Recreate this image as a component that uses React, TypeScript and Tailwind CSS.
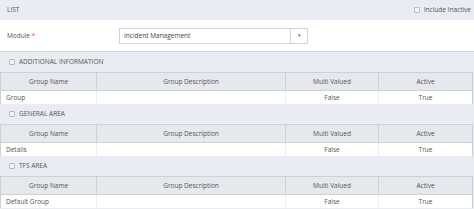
import React from "react";

const sections = [
  { title: "ADDITIONAL INFORMATION", name: "Group" },
  { title: "GENERAL AREA", name: "Details" },
  { title: "TFS AREA", name: "Default Group" },
];

function Box() {
  return <span className="inline-block w-[6px] h-[6px] border border-[#b8bcc4] bg-[#f4f5f8] rounded-[1px]" />;
}

export default function App() {
  return (
    <div
      className="w-[474px] h-[209px] bg-[#e9ecf3] text-[#555] text-[6.5px] overflow-hidden"
      style={{ fontFamily: '"Open Sans", "Liberation Sans", sans-serif' }}
    >
      <div className="h-[20px] flex items-center justify-between pl-[7px] pr-[3px]">
        <span>LIST</span>
        <div className="flex items-center gap-[4px]">
          <Box />
          <span>Include Inactive</span>
        </div>
      </div>

      <div className="h-[32px] bg-white border-b border-[#d3d6dc] flex items-center">
        <div className="w-[119px] pl-[7px]">
          Module <span className="text-[#e05a5a]">*</span>
        </div>
        <div className="w-[189px] h-[16px] border border-[#d0d3d8] flex">
          <div className="flex-1 flex items-center pl-[4px] text-[#444]">Incident Management</div>
          <div className="w-[17px] border-l border-[#d0d3d8] flex items-center justify-center text-[5px] text-[#666]">
            ▾
          </div>
        </div>
      </div>

      {sections.map((s) => (
        <div key={s.title}>
          <div className="h-[20px] flex items-center gap-[4px] pl-[9px]">
            <Box />
            <span>{s.title}</span>
          </div>
          <div className="w-[473px] border-l border-r border-[#cdd0d6]">
            <div className="h-[19px] flex bg-[#e5e8ed] border-t border-b border-[#cdd0d6]">
              <div className="w-[96px] flex items-center justify-center border-r border-[#cdd0d6]">Group Name</div>
              <div className="w-[189px] flex items-center justify-center border-r border-[#cdd0d6]">Group Description</div>
              <div className="w-[93px] flex items-center justify-center border-r border-[#cdd0d6]">Multi Valued</div>
              <div className="flex-1 flex items-center justify-center">Active</div>
            </div>
            <div className="h-[13px] flex bg-white">
              <div className="w-[96px] flex items-center pl-[5px] border-r border-[#eceef1]">{s.name}</div>
              <div className="w-[189px] border-r border-[#eceef1]" />
              <div className="w-[93px] flex items-center justify-center border-r border-[#eceef1]">False</div>
              <div className="flex-1 flex items-center justify-center">True</div>
            </div>
          </div>
        </div>
      ))}
    </div>
  );
}
